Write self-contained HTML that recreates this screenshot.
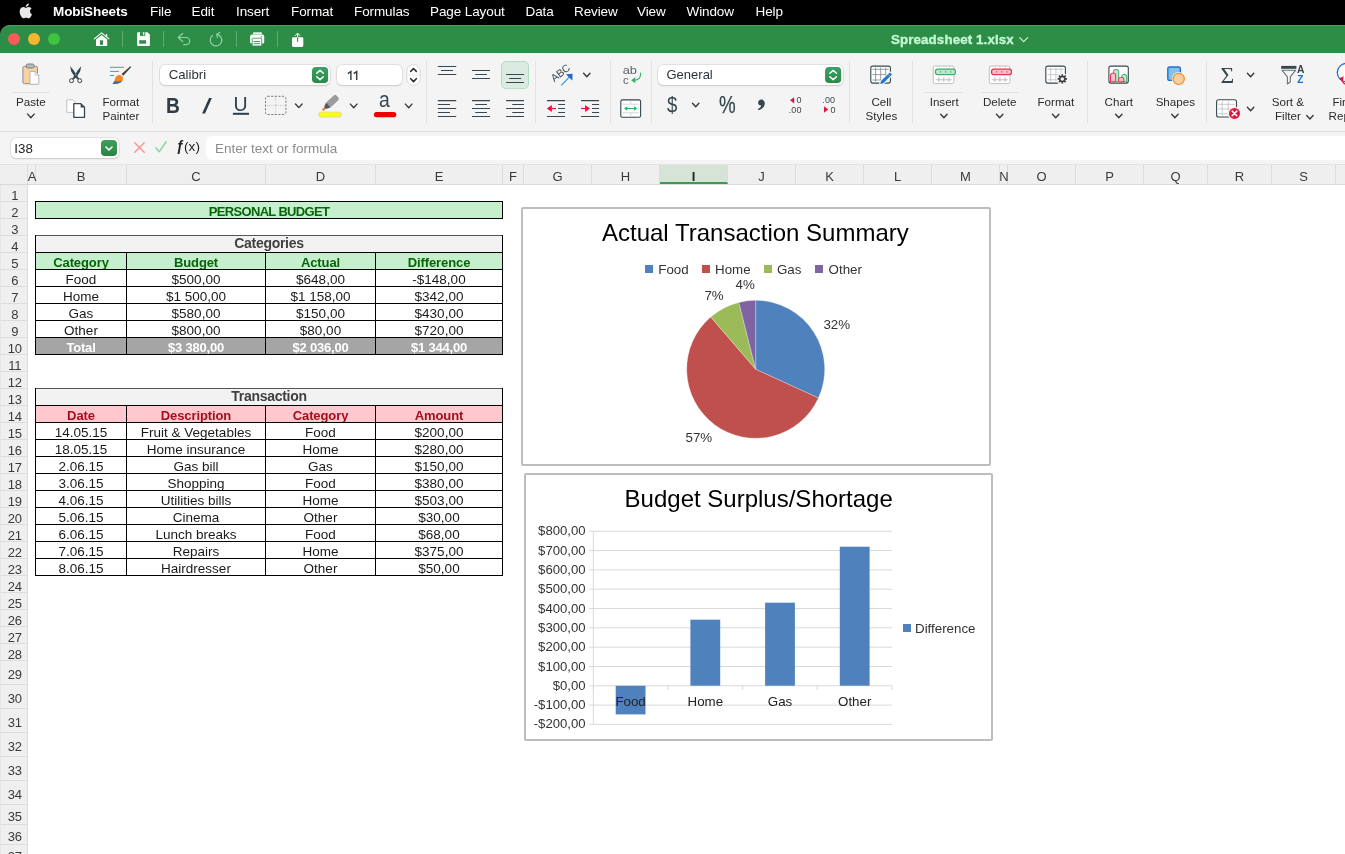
<!DOCTYPE html>
<html><head><meta charset="utf-8"><title>MobiSheets</title>
<style>
*{box-sizing:border-box;margin:0;padding:0}
html,body{width:1345px;height:854px;overflow:hidden;background:#fff;font-family:"Liberation Sans",sans-serif;}
.abs{position:absolute}
#menubar{position:absolute;left:0;top:0;width:1345px;height:25px;background:#000;color:#fff;font-size:13.5px}
#menubar span{position:absolute;top:4px;white-space:nowrap;letter-spacing:-0.1px}
#titlebar{position:absolute;left:0;top:25px;width:1345px;height:28px;background:#2d8d47;border-top-left-radius:10px;box-shadow:inset 0 1px 0 #4c9f63}
#blackcorner{position:absolute;left:0;top:25px;width:12px;height:12px;background:#000}
.tl{position:absolute;top:8px;width:12px;height:12px;border-radius:6px}
.tsep{position:absolute;top:6px;width:1px;height:16px;background:#62ab76}
#ribbon{position:absolute;left:0;top:53px;width:1345px;height:78px;background:#f4f4f4}
#ribline{position:absolute;left:0;top:131px;width:1345px;height:1px;background:#dddddd}
#fbar{position:absolute;left:0;top:132px;width:1345px;height:32px;background:#f4f4f4}
.vsep{position:absolute;top:8px;width:1px;height:62px;background:#e2e2e2}
.lbl{position:absolute;font-size:11.6px;color:#2b2b2b;white-space:nowrap;text-align:center;transform:translateX(-50%);line-height:14px}
.sel{position:absolute;background:#fff;border-radius:5px;box-shadow:0 0 0 0.5px #cfcfcf,0 1px 1.5px rgba(0,0,0,.18);font-size:13.5px;color:#222}
.gbtn{position:absolute;width:16px;height:16px;border-radius:4px;background:linear-gradient(#3fa05a,#2a8444)}
svg{position:absolute;overflow:visible}
#colhdr{position:absolute;left:0;top:164px;width:1345px;height:21px;background:#efefef;border-top:1px solid #e2e2e2;border-bottom:1px solid #d8d8d8}
.ch{position:absolute;top:0;height:19px;border-right:1px solid #dcdcdc;font-size:13px;color:#3a3a3a;text-align:center;line-height:24.4px}
#rowhdr{position:absolute;left:0;top:185px;width:28px;height:669px;background:#efefef;border-right:1px solid #dcdcdc;border-left:1px solid #e6e6e6}
.rh{position:absolute;left:0;width:26px;border-bottom:1px solid #dcdcdc;font-size:13px;color:#3a3a3a;text-align:center;padding-left:1.6px;letter-spacing:-0.2px}
.c{position:absolute;font-size:13.5px;color:#1a1a1a;text-align:center;white-space:nowrap;line-height:17px;height:17px}
.b{font-weight:bold;font-size:13px}
.bx{position:absolute;border:1px solid #000}
.hl{position:absolute;height:1px;background:#000}
.vl{position:absolute;width:1px;background:#000}
.ct{position:absolute;white-space:nowrap;color:#333;font-size:13.33px;line-height:14px}
</style></head><body><div id="root" style="position:absolute;left:0;top:0;width:1345px;height:854px;overflow:hidden;will-change:transform;background:#fff">

<div id="menubar">
<svg style="left:18.2px;top:3px" width="15.5" height="18.6" viewBox="0 0 170 200"><path fill="#e8e8e8" d="M150.4 130.3c-2.4 5.6-5.3 10.8-8.6 15.5-4.5 6.5-8.3 11-11.1 13.4-4.4 4.1-9.2 6.2-14.3 6.3-3.7 0-8.1-1-13.2-3.200-5.100-2.100-9.800-3.100-14.100-3.100-4.500 0-9.300 1-14.500 3.100-5.200 2.100-9.300 3.200-12.500 3.300-4.900.2-9.800-1.900-14.700-6.400-3.100-2.700-7-7.400-11.700-14-5-7-9.100-15.200-12.300-24.500-3.400-10-5.200-19.800-5.200-29.200 0-10.800 2.300-20.100 7-27.900 3.700-6.300 8.600-11.200 14.700-14.900 6.100-3.600 12.800-5.500 19.900-5.600 3.900 0 9 1.200 15.400 3.600 6.300 2.400 10.400 3.600 12.200 3.600 1.300 0 5.900-1.400 13.500-4.200 7.200-2.600 13.300-3.700 18.300-3.200 13.500 1.100 23.700 6.400 30.500 16-12.100 7.300-18.100 17.600-17.900 30.700.1 10.200 3.800 18.800 11.100 25.500 3.300 3.100 7 5.500 11.100 7.300-.9 2.600-1.800 5.100-2.800 7.400zM119.100 7c0 8-2.900 15.500-8.800 22.500-7 8.200-15.500 13-24.800 12.200-.1-1-.2-2-.2-3 0-7.700 3.400-16 9.300-22.700 3-3.400 6.800-6.200 11.300-8.500 4.600-2.200 8.900-3.400 12.900-3.700.1 1.100.2 2.200.2 3.200z"/></svg>
<span style="left:53px;font-weight:bold;">MobiSheets</span>
<span style="left:150px;">File</span>
<span style="left:191.5px;">Edit</span>
<span style="left:236px;">Insert</span>
<span style="left:291px;">Format</span>
<span style="left:354px;">Formulas</span>
<span style="left:430px;">Page Layout</span>
<span style="left:525.5px;">Data</span>
<span style="left:574px;">Review</span>
<span style="left:637px;">View</span>
<span style="left:686.5px;">Window</span>
<span style="left:755.5px;">Help</span>
</div>
<div id="blackcorner"></div><div id="titlebar">
<div class="tl" style="left:8px;background:#f35c58"></div><div class="tl" style="left:28px;background:#f8b62c"></div><div class="tl" style="left:48px;background:#3ec440"></div>
<div class="tsep" style="left:122px"></div>
<div class="tsep" style="left:163px"></div>
<div class="tsep" style="left:236px"></div>
<div class="tsep" style="left:277px"></div>
<div class="abs" style="left:0;top:-25px;width:1345px;height:100px">
<svg style="left:0;top:0" width="1345" height="100" viewBox="0 0 1345 100">
<path d="M94.300 38.900l7.300-6 7.300 6" fill="none" stroke="#fff" stroke-width="1.100" stroke-linejoin="miter" stroke-linecap="round"/>
<path d="M96 39.400l5.600-4.500 5.600 4.500v6.100a0.500 0.500 0 0 1-0.500 0.500h-10.200a0.500 0.500 0 0 1-0.500-0.500z" fill="#fff"/><path d="M105.900 34h1.300v3.600l-1.300-1.100z" fill="#fff"/>
<rect x="99.900" y="40.300" width="3.100" height="4.500" fill="#2d8d47"/>
<path d="M138.100 32.200h9.400l2.400 2.400v10.400a1 1 0 0 1-1 1h-10.800a1 1 0 0 1-1-1v-11.800a1 1 0 0 1 1-1z" fill="#fff"/>
<rect x="140" y="32.200" width="5.300" height="3.700" fill="#2d8d47"/><rect x="143.100" y="32.200" width="1.200" height="3" fill="#fff"/><rect x="139.200" y="40.200" width="6.900" height="3.500" fill="#2d8d47"/>
<path d="M182.700 33.500l-4.500 4 4.500 4M178.400 37.500h7.700a3.600 3.600 0 0 1 0 7.200h-2.300" fill="none" stroke="#90d0a3" stroke-width="1.200" stroke-linecap="round" stroke-linejoin="round"/>
<path d="M212.500 35.500A5.800 5.800 0 1 0 217 34.400" fill="none" stroke="#90d0a3" stroke-width="1.200" stroke-linecap="round"/><path d="M220 32.300l-3.500 2.100 1.100 3.200" fill="none" stroke="#90d0a3" stroke-width="1.200" stroke-linecap="round" stroke-linejoin="round"/>
<path d="M253.400 32.200h8.100l0.700 2h-9.500z" fill="#e4f3e8"/>
<path d="M252 34.500h10.300a1.900 1.900 0 0 1 1.900 1.900v6.200a1 1 0 0 1-1 1h-12.100a1 1 0 0 1-1-1v-6.200a1.900 1.900 0 0 1 1.900-1.900z" fill="#fff"/>
<rect x="252.200" y="38.200" width="9.500" height="7.800" rx="0.600" fill="#fff" stroke="#2d8d47" stroke-width="0.800"/><path d="M253.800 41.500h6.200M253.800 43.700h6.200" stroke="#2d8d47" stroke-width="0.900"/><circle cx="261.300" cy="36.700" r="0.600" fill="#2d8d47"/>
<rect x="292" y="37.300" width="11.300" height="9.600" rx="1.300" fill="#fff"/>
<rect x="297.050" y="37.200" width="1.100" height="4.700" fill="#2d8d47"/><rect x="297.050" y="33.300" width="1.100" height="4" fill="#fff"/>
<path d="M295.300 35.500l2.300-2.400 2.300 2.400" fill="none" stroke="#fff" stroke-width="1" stroke-linecap="round" stroke-linejoin="round"/>
</svg></div>
<div class="abs" style="left:891px;top:6.5px;font-size:13.3px;font-weight:bold;color:#c4f7d3;white-space:nowrap;letter-spacing:0.13px;-webkit-text-stroke:0.35px #c4f7d3">Spreadsheet 1.xlsx</div>
<svg style="left:1019px;top:11.5px" width="10" height="6" viewBox="0 0 10 6"><path d="M0.700 0.700l4 4 4-4" fill="none" stroke="#cdf5d9" stroke-width="1.150" stroke-linecap="round" stroke-linejoin="round"/></svg>
</div>
<div id="ribbon">
<div class="vsep" style="left:152px"></div>
<div class="vsep" style="left:426px"></div>
<div class="vsep" style="left:535px"></div>
<div class="vsep" style="left:610px"></div>
<div class="vsep" style="left:651px"></div>
<div class="vsep" style="left:849px"></div>
<div class="vsep" style="left:912px"></div>
<div class="vsep" style="left:1087px"></div>
<div class="vsep" style="left:1206px"></div>
<div class="abs" style="left:0;top:-53px;width:1345px;height:854px">
<svg style="left:0;top:0" width="1345" height="854" viewBox="0 0 1345 854">
<rect x="22.900" y="66.300" width="14.600" height="17.400" rx="1.800" fill="#f9d2a4" stroke="#8d8d8d" stroke-width="1"/>
<rect x="26.200" y="64" width="8" height="4" rx="1.600" fill="#b9bcbe" stroke="#6f777c" stroke-width="0.900"/>
<path d="M30 71.500h5.200l3.600 3.600v9.200h-8.800z" fill="#fff" stroke="#b6b6b6" stroke-width="1" stroke-linejoin="round"/>
<path d="M35.200 71.500v3.600h3.600" fill="none" stroke="#bdbdbd" stroke-width="0.900"/>
<line x1="12" y1="92.500" x2="49.700" y2="92.500" stroke="#e2e2e2" stroke-width="1"/>
<path d="M70.100 66.100L73.600 70.200L77.700 76.600L79.300 79.100L77.800 79.600L74.700 76.900L71.300 71.500z" fill="#37474f"/>
<path d="M81.300 66.100L77.800 70.200L73.700 76.600L72.100 79.100L73.600 79.600L76.700 76.900L80.100 71.500z" fill="#37474f"/>
<circle cx="71.500" cy="80.700" r="2" fill="none" stroke="#37474f" stroke-width="1"/><circle cx="79.700" cy="80.700" r="2" fill="none" stroke="#37474f" stroke-width="1"/>
<circle cx="75.700" cy="74.700" r="0.900" fill="#3a9bdc"/>
<path d="M66.800 99.800h6l3 3v9.600h-9z" fill="#fff" stroke="#c2c2c2" stroke-width="1" stroke-linejoin="round"/>
<path d="M73.800 103.600h7l3.700 3.700v10h-10.700z" fill="#fff" stroke="#37474f" stroke-width="1.300" stroke-linejoin="round"/>
<path d="M80.600 103.600l3.900 3.900h-3.900z" fill="#37474f"/>
<path d="M110 67.300h14M110 71.400h9M110 75.500h4.200" stroke="#3a9bdc" stroke-width="1" fill="none"/>
<path d="M130.300 66.200l1 0.900-8 8.600-1.800-1.700z" fill="#37474f"/>
<path d="M115 79c0.500-3 3.500-4.700 6.100-3.500 2 1 2.400 3.300 1.200 5.400-1.500 2.500-5 3.300-9.700 3 1.400-1.300 2-3 2.400-4.900z" fill="#f6861f"/>
<path d="M114.400 81c2.500 0.800 5.300 0.500 7.700-0.400-1.500 2.700-5 3.600-9.700 3.300 1-0.800 1.600-1.800 2-2.900z" fill="#2f6fba"/>
<path d="M209 98.100h2.900l-6.900 15.500h-2.900z" fill="#2f3d49"/>
<rect x="232.900" y="112.800" width="16.100" height="2" fill="#2f3d49"/>
<rect x="265.500" y="96.300" width="20.400" height="18.200" rx="2" fill="none" stroke="#7d7d7d" stroke-width="1" stroke-dasharray="2.200 1.400"/>
<path d="M275.700 97.500v16M267 105.400h17.600" stroke="#a9a9a9" stroke-width="0.800" stroke-dasharray="0.900 1.300" fill="none"/>
<path d="M27.6 114.1L30.9 117.7L34.2 114.1" fill="none" stroke="#333b41" stroke-width="1.4" stroke-linecap="round" stroke-linejoin="round"/>
<path d="M295.5 104.0L298.8 107.6L302.1 104.0" fill="none" stroke="#333b41" stroke-width="1.4" stroke-linecap="round" stroke-linejoin="round"/>
<path d="M350.4 104.1L353.7 107.7L357.0 104.1" fill="none" stroke="#333b41" stroke-width="1.4" stroke-linecap="round" stroke-linejoin="round"/>
<path d="M405.4 104.1L408.7 107.7L412.0 104.1" fill="none" stroke="#333b41" stroke-width="1.4" stroke-linecap="round" stroke-linejoin="round"/>
<rect x="318.600" y="112.100" width="22.800" height="5" rx="2.300" fill="#ffff00" stroke="#c8c8dd" stroke-width="0.600"/>
<g transform="translate(332.700 100.900) rotate(-43)"><rect x="-6.400" y="-3.300" width="12.800" height="6.600" rx="1.900" fill="#9a9b9c"/><path d="M-6 -3.300L-10.600 -1.300v2.600L-6 3.300z" fill="#4d5a63"/><ellipse cx="-12.200" cy="0" rx="1.700" ry="1.200" fill="#f57c1f"/></g>
<rect x="373.900" y="112.100" width="22.400" height="5.100" rx="2.500" fill="#ef0000"/>
<rect x="406.800" y="64.600" width="13.400" height="20.700" rx="6.500" fill="#fff" stroke="#cbcbcb" stroke-width="0.700"/>
<line x1="407.500" y1="74.900" x2="419.500" y2="74.900" stroke="#e3e3e3" stroke-width="0.800"/>
<path d="M410.700 71.400l2.800-2.900 2.800 2.900M410.700 78.700l2.800 2.900 2.800-2.900" fill="none" stroke="#2b2f33" stroke-width="1.600" stroke-linecap="round" stroke-linejoin="round"/>
<path d="M437.8 66.5H456.2M441 70.5H453M437.8 74.4H456.2" stroke="#3a4750" stroke-width="1.050" fill="none"/>
<path d="M472 70.5H490M475.2 74.4H486.9M472 78.4H490" stroke="#3a4750" stroke-width="1.050" fill="none"/>
<rect x="501.500" y="61.600" width="27" height="27" rx="4.500" fill="#dcebe1" stroke="#b3dac2" stroke-width="1"/>
<path d="M506.1 74.4H524M509.2 78.4H521.1M506.1 82.4H524" stroke="#3a4750" stroke-width="1.050" fill="none"/>
<path d="M437.8 100.6H456.2M437.8 104.5H450M437.8 108.5H456.2M437.8 112.5H450M437.8 116.5H456.2" stroke="#3a4750" stroke-width="1.050" fill="none"/>
<path d="M472 100.6H490M475.2 104.5H486.9M472 108.5H490M475.2 112.5H486.9M472 116.5H490" stroke="#3a4750" stroke-width="1.050" fill="none"/>
<path d="M506.1 100.6H524M512.2 104.5H524M506.1 108.5H524M512.2 112.5H524M506.1 116.5H524" stroke="#3a4750" stroke-width="1.050" fill="none"/>
<text x="0" y="0" transform="translate(554.300 82.200) rotate(-38)" font-family="Liberation Sans" font-size="10.500" fill="#3a4750" letter-spacing="-0.200">ABC</text>
<path d="M561.300 85.300L570 76.400" stroke="#2b8fe0" stroke-width="1.100" fill="none"/>
<path d="M572.600 73.800l-0.300 6.800-6.400-6.300z" fill="#1f6cc0"/>
<path d="M583.6 73.2L586.8 76.8L590.0 73.2" fill="none" stroke="#333b41" stroke-width="1.4" stroke-linecap="round" stroke-linejoin="round"/>
<path d="M546.900 100.600H565M546.900 116.500H565M558.200 104.500H565M558.200 108.500H565M558.200 112.500H565" stroke="#3a4750" stroke-width="1.050" fill="none"/>
<path d="M546.900 108.500l4.900-3.600v7.200z" fill="#e0143c"/><path d="M551 108.500h5" stroke="#e0143c" stroke-width="1.200"/>
<path d="M581 100.600H599.100M581 116.500H599.100M592 104.500H599.100M592 108.500H599.100M592 112.500H599.100" stroke="#3a4750" stroke-width="1.050" fill="none"/>
<path d="M590 108.500l-4.900-3.600v7.200z" fill="#e0143c"/><path d="M581 108.500h5" stroke="#e0143c" stroke-width="1.200"/>
<text x="622.700" y="73.500" font-family="Liberation Sans" font-size="10.300" fill="#59636b" textLength="14.300" lengthAdjust="spacingAndGlyphs">ab</text>
<text x="622.900" y="83.500" font-family="Liberation Sans" font-size="10.300" fill="#59636b" textLength="5.700" lengthAdjust="spacingAndGlyphs">c</text>
<path d="M640.600 73c0.300 4.500-1.800 7.200-6.400 7.300" stroke="#3dae6a" stroke-width="1.100" fill="none" stroke-linecap="round"/>
<path d="M631.100 80.300l4.200-3v6z" fill="#3dae6a"/>
<rect x="620.800" y="99.900" width="19.800" height="17.400" rx="1.500" fill="#fff" stroke="#37474f" stroke-width="1.100"/>
<path d="M622.500 104.200h16.500M622.500 112.800h16.500M630.700 101v3.200M630.700 112.800v3.400" stroke="#d0d3d5" stroke-width="0.900" fill="none"/>
<path d="M625.500 108.500h10" stroke="#3dae6a" stroke-width="1.100"/><path d="M624 108.500l3.200-2.300v4.600zM637.200 108.500l-3.200-2.300v4.600z" fill="#3dae6a"/>
<path d="M692.5 103.2L695.7 106.8L698.9 103.2" fill="none" stroke="#333b41" stroke-width="1.4" stroke-linecap="round" stroke-linejoin="round"/>
<path d="M761.300 99.600c2 0 3.500 1.500 3.500 3.700 0 3.200-2.500 5.900-6.300 7l-0.700-1.200c2-0.800 3.200-2 3.500-3.500-1.800 0.200-3.200-1-3.200-2.800 0-1.800 1.400-3.200 3.200-3.200z" fill="#37474f"/>
<path d="M790 100.300l4.200-3.100v6.200z" fill="#e0143c"/>
<text x="796.600" y="103.300" font-family="Liberation Sans" font-size="9.000" fill="#3a4750">0</text>
<text x="788.700" y="113" font-family="Liberation Sans" font-size="9.000" fill="#3a4750" letter-spacing="0.100">.00</text>
<text x="822.300" y="103.300" font-family="Liberation Sans" font-size="9.000" fill="#3a4750" letter-spacing="0.100">.00</text>
<path d="M828.200 109.500l-4.200-3.200v6.400z" fill="#e0143c"/>
<text x="830.500" y="113" font-family="Liberation Sans" font-size="9.000" fill="#3a4750">0</text>
<rect x="870.800" y="66.100" width="19.600" height="17" rx="2" fill="#fff" stroke="#37474f" stroke-width="1.100"/>
<path d="M875.600 67.500v14.200M880.700 67.500v14.200M885.700 67.500v14.200M872.500 69.300h16.200M872.500 74.600h16.200M872.500 80h16.200" stroke="#8f979c" stroke-width="0.950" fill="none"/>
<path d="M889.800 72.400l2.400 2.200-9 9-3.200 0.900 0.800-3.200z" fill="#f4f4f4" stroke="#f4f4f4" stroke-width="2" stroke-linejoin="round"/>
<path d="M889.900 72.600l2.100 2-8.700 8.700-3 0.800 0.700-3z" fill="#1f73c9"/><path d="M888.300 74.200l2.100 2" stroke="#f4f4f4" stroke-width="0.500"/>
<rect x="933.2" y="66" width="20.700" height="17.600" rx="2" fill="#fff" stroke="#bfbfbf" stroke-width="1"/>
<path d="M938.7 67.200h0.800M943.5 67.200h0.800M948.8000000000001 67.200h0.800" stroke="#b5b5b5" stroke-width="0.700"/>
<path d="M935.7 79.800h16M938.8000000000001 77.200v4.800M943.8000000000001 77.200v4.800M948.9000000000001 77.200v4.800" stroke="#b9b9b9" stroke-width="0.900" fill="none"/>
<rect x="935.4000000000001" y="69.100" width="20" height="5.500" rx="2.300" fill="#bfe6cf" stroke="#3dae6a" stroke-width="1.200"/>
<path d="M940.6 71v1.700M945.7 71v1.700M950.8000000000001 71v1.700" stroke="#3dae6a" stroke-width="0.900"/>
<rect x="989.3" y="66" width="20.700" height="17.600" rx="2" fill="#fff" stroke="#bfbfbf" stroke-width="1"/>
<path d="M994.8 67.200h0.800M999.5999999999999 67.200h0.800M1004.9 67.200h0.800" stroke="#b5b5b5" stroke-width="0.700"/>
<path d="M991.8 79.800h16M994.9 77.200v4.800M999.9 77.200v4.800M1005.0 77.200v4.800" stroke="#b9b9b9" stroke-width="0.900" fill="none"/>
<rect x="991.5" y="69.100" width="20" height="5.500" rx="2.300" fill="#f9c0c8" stroke="#e8304f" stroke-width="1.200"/>
<path d="M996.6999999999999 71v1.700M1001.8 71v1.700M1006.9 71v1.700" stroke="#e8304f" stroke-width="0.900"/>
<path d="M925 92.500h37.800M981.200 92.500h37.700" stroke="#e2e2e2" stroke-width="1"/>
<path d="M940.7 114.2L943.9 117.7L947.1 114.2" fill="none" stroke="#333b41" stroke-width="1.4" stroke-linecap="round" stroke-linejoin="round"/>
<path d="M996.5 114.2L999.7 117.7L1002.9 114.2" fill="none" stroke="#333b41" stroke-width="1.4" stroke-linecap="round" stroke-linejoin="round"/>
<path d="M1052.5 114.2L1055.7 117.7L1058.9 114.2" fill="none" stroke="#333b41" stroke-width="1.4" stroke-linecap="round" stroke-linejoin="round"/>
<path d="M1115.6 114.2L1118.8 117.7L1122.0 114.2" fill="none" stroke="#333b41" stroke-width="1.4" stroke-linecap="round" stroke-linejoin="round"/>
<path d="M1171.7 114.2L1174.9 117.7L1178.1 114.2" fill="none" stroke="#333b41" stroke-width="1.4" stroke-linecap="round" stroke-linejoin="round"/>
<rect x="1045.800" y="66.100" width="19.600" height="17" rx="2" fill="#fff" stroke="#37474f" stroke-width="1.100"/>
<path d="M1050.600 67.500v14.200M1055.900 67.500v14.200M1061 67.500v14.200M1047.500 69.300h16.200M1047.500 74.600h16.200M1047.500 79.800h16.200" stroke="#c4c4c4" stroke-width="0.900" fill="none"/>
<circle cx="1062.300" cy="78.900" r="6" fill="#f4f4f4"/>
<path d="M1064.90 78.90L1067.00 78.90M1064.14 80.74L1065.62 82.22M1062.30 81.50L1062.30 83.60M1060.46 80.74L1058.98 82.22M1059.70 78.90L1057.60 78.90M1060.46 77.06L1058.98 75.58M1062.30 76.30L1062.30 74.20M1064.14 77.06L1065.62 75.58" stroke="#3a3f44" stroke-width="1.700" fill="none"/>
<circle cx="1062.300" cy="78.900" r="2.500" fill="none" stroke="#3a3f44" stroke-width="1.500"/>
<rect x="1108.900" y="66.100" width="19.400" height="17" rx="2" fill="#fff" stroke="#37474f" stroke-width="1.100"/>
<path d="M1113.5 81.800V71.3a1.800 1.800 0 0 1 1.800-1.800h1.6a1.800 1.800 0 0 1 1.800 1.800V81.800z" fill="#bfe6cf" stroke="#3dae6a" stroke-width="1"/>
<path d="M1121.8 81.800V76.3a1.800 1.800 0 0 1 1.800-1.800h1.4a1.800 1.800 0 0 1 1.800 1.800V81.800z" fill="#bfe6cf" stroke="#3dae6a" stroke-width="1"/>
<path d="M1110.5 81.800V75.0a1.800 1.800 0 0 1 1.800-1.800h1.6a1.800 1.800 0 0 1 1.800 1.800V81.800z" fill="#f9c0c8" stroke="#e8304f" stroke-width="1"/>
<path d="M1118.7 81.800V79.2a1.800 1.800 0 0 1 1.800-1.800h1.4a1.800 1.800 0 0 1 1.800 1.800V81.800z" fill="#f9c0c8" stroke="#e8304f" stroke-width="1"/>
<rect x="1167.800" y="67" width="12.600" height="13.400" rx="2" fill="#7fc4e8" stroke="#1f6fd0" stroke-width="1.400"/>
<circle cx="1178.700" cy="78.900" r="7" fill="#f4f4f4"/><circle cx="1178.700" cy="78.900" r="5.600" fill="#f8cfa0" stroke="#f08a24" stroke-width="1.200"/>
<path d="M1247.4 73.2L1250.6 76.7L1253.8 73.2" fill="none" stroke="#333b41" stroke-width="1.4" stroke-linecap="round" stroke-linejoin="round"/>
<path d="M1247.4 107.2L1250.6 110.7L1253.8 107.2" fill="none" stroke="#333b41" stroke-width="1.4" stroke-linecap="round" stroke-linejoin="round"/>
<rect x="1216.600" y="99.800" width="19.900" height="17.200" rx="2" fill="#fff" stroke="#37474f" stroke-width="1.100"/>
<path d="M1222.200 101.200v14.500M1228.300 101.200v14.500M1218.200 104.300h16.600M1218.200 108.900h16.600M1218.200 113.700h16.600" stroke="#c4c4c4" stroke-width="0.900" fill="none"/>
<circle cx="1234.500" cy="113.400" r="6.700" fill="#f4f4f4"/><circle cx="1234.500" cy="113.400" r="5.500" fill="#e0143c"/>
<path d="M1232.200 111.100l4.600 4.600M1236.800 111.100l-4.600 4.600" stroke="#fff" stroke-width="1.500" stroke-linecap="round"/>
<rect x="1281.200" y="65.900" width="15.200" height="2.900" fill="#37474f"/>
<path d="M1282 70.200h13.700l-5.400 6.600v5l-2.900 2.200v-7.200z" fill="none" stroke="#6a737a" stroke-width="1.100" stroke-linejoin="round"/>
<text x="1297" y="73.200" style="font-family:'Liberation Sans';font-weight:700" font-size="10.300" fill="#37474f">A</text>
<text x="1297.200" y="83" style="font-family:'Liberation Sans';font-weight:700" font-size="10" fill="#1f6fd0">Z</text>
<path d="M1306.7 115.5L1309.9 118.9L1313.1 115.5" fill="none" stroke="#333b41" stroke-width="1.4" stroke-linecap="round" stroke-linejoin="round"/>
<circle cx="1346.500" cy="72.600" r="9.200" fill="#fff" stroke="#1f6fd0" stroke-width="1.300"/>
<path d="M1338.800 78.500l4.800-2.200-0.600 5z" fill="#e0143c"/><path d="M1341.500 79.500c1 3 2.500 4.500 5 5" stroke="#e0143c" stroke-width="1.200" fill="none"/>
</svg>
<div class="sel" style="left:160px;top:64.500px;width:170px;height:20.800px;line-height:20.800px;padding-left:8.700px;font-size:13.200px;color:#2c3338">Calibri</div>
<div class="sel" style="left:337px;top:64.500px;width:65px;height:20.800px;line-height:20.800px;padding-left:10.600px;font-size:13.200px;color:#2c3338;"></div>
<div class="sel" style="left:657.500px;top:64.500px;width:185.500px;height:20.800px;line-height:20.800px;padding-left:9px;font-size:13.000px;color:#2c3338">General</div>
<svg style="left:0;top:0" width="1345" height="854" viewBox="0 0 1345 854">
<defs><linearGradient id="g312" x1="0" y1="0" x2="0" y2="1"><stop offset="0" stop-color="#3aa063"/><stop offset="1" stop-color="#2b8a4d"/></linearGradient></defs>
<rect x="312" y="66.9" width="16.100" height="16.100" rx="3.800" fill="url(#g312)"/>
<path d="M316.75 73.2L320.05 70.4L323.35 73.2M316.75 76.80000000000001L320.05 79.60000000000001L323.35 76.80000000000001" fill="none" stroke="#fff" stroke-width="1.500" stroke-linecap="round" stroke-linejoin="round"/>
<defs><linearGradient id="g825" x1="0" y1="0" x2="0" y2="1"><stop offset="0" stop-color="#3aa063"/><stop offset="1" stop-color="#2b8a4d"/></linearGradient></defs>
<rect x="825.1" y="66.9" width="16.100" height="16.100" rx="3.800" fill="url(#g825)"/>
<path d="M829.85 73.2L833.15 70.4L836.4499999999999 73.2M829.85 76.80000000000001L833.15 79.60000000000001L836.4499999999999 76.80000000000001" fill="none" stroke="#fff" stroke-width="1.500" stroke-linecap="round" stroke-linejoin="round"/>
<path d="M347.900 73.600L350.900 71.500V80M353.700 73.600L356.700 71.500V80" fill="none" stroke="#2c3338" stroke-width="1.350" stroke-linejoin="miter"/>
</svg>
<div class="lbl" style="left:30.9px;top:94.8px">Paste</div>
<div class="lbl" style="left:120.8px;top:94.8px">Format</div>
<div class="lbl" style="left:120.9px;top:108.7px">Painter</div>
<div class="lbl" style="left:881.4px;top:94.8px">Cell</div>
<div class="lbl" style="left:881.4px;top:108.7px">Styles</div>
<div class="lbl" style="left:944.2px;top:94.8px">Insert</div>
<div class="lbl" style="left:999.7px;top:94.8px">Delete</div>
<div class="lbl" style="left:1055.9px;top:94.8px">Format</div>
<div class="lbl" style="left:1118.8px;top:94.8px">Chart</div>
<div class="lbl" style="left:1175.3px;top:94.8px">Shapes</div>
<div class="lbl" style="left:1287.9px;top:94.8px">Sort &amp;</div>
<div class="lbl" style="left:1287.9px;top:108.7px">Filter</div>
<div class="lbl" style="left:1332.4px;top:94.800px;transform:none;text-align:left">Find &amp;</div>
<div class="lbl" style="left:1328.600px;top:108.700px;transform:none;text-align:left">Replace</div>
<div class="abs" style="left:166.400px;top:93.600px;font-size:22.5px;font-weight:bold;color:#2f3d49;line-height:24px;transform-origin:0 0;transform:scaleX(0.850)">B</div>
<div class="abs" style="left:233.600px;top:93.200px;font-size:19.500px;color:#2f3d49;line-height:22px;transform-origin:0 0;transform:scaleX(1.0)">U</div>
<div class="abs" style="left:379.300px;top:88.400px;font-size:21.500px;color:#3a4750;line-height:24px;transform-origin:0 0;transform:scaleX(0.900)">a</div>
<div class="abs" style="left:666.500px;top:92.600px;font-size:21.500px;color:#37474f;line-height:24px;transform-origin:0 0;transform:scaleX(0.860)">$</div>
<div class="abs" style="left:718.600px;top:92.400px;font-size:24px;color:#37474f;line-height:26px;transform-origin:0 0;transform:scaleX(0.780);-webkit-text-stroke:0.25px #37474f">%</div>
<div class="abs" style="left:1220.600px;top:61.000px;font-size:23.6px;font-family:'Liberation Serif',serif;color:#37474f;line-height:28px;transform-origin:0 0;transform:scaleX(1.0)">&Sigma;</div>
</div>
</div><div id="ribline"></div>
<div id="fbar">
<div class="sel" style="left:11px;top:5.5px;width:107.6px;height:20.8px;line-height:21.4px;padding-left:3.3px;font-size:13.3px">I38</div>
<div class="gbtn" style="left:101px;top:8px"></div>
<svg style="left:105px;top:13.500px" width="8" height="6" viewBox="0 0 8 6"><path d="M1 1l3 3 3-3" fill="none" stroke="#fff" stroke-width="1.600" stroke-linecap="round" stroke-linejoin="round"/></svg>
<svg style="left:134px;top:10px" width="11" height="11" viewBox="0 0 11 11"><path d="M0.800 0.800l9.400 9.400M10.200 0.800l-9.400 9.400" stroke="#f19797" stroke-width="1.500" fill="none" stroke-linecap="round"/></svg>
<svg style="left:155px;top:9px" width="12" height="12" viewBox="0 0 12 12"><path d="M0.800 6.800l3.400 4 7-10" stroke="#86dc9b" stroke-width="1.500" fill="none" stroke-linecap="round" stroke-linejoin="round"/></svg>
<div class="abs" style="left:176px;top:6px;font-size:13.500px;color:#222;white-space:nowrap"><i style="font-weight:bold;font-size:14px;margin-right:0.2px">&fnof;</i><span style="font-size:13.6px;letter-spacing:0.1px">(x)</span></div>
<div class="abs" style="left:206px;top:4px;width:1139px;height:24px;background:#fff;border-radius:6px 0 0 6px"></div>
<div class="abs" style="left:215px;top:8.7px;font-size:13.500px;color:#8c8c8c;white-space:nowrap">Enter text or formula</div>
</div>
<div id="colhdr">
<div class="ch" style="left:0px;width:28px;"></div>
<div class="ch" style="left:28px;width:8px;"><span style="position:absolute;left:-4px;width:16px;text-align:center">A</span></div>
<div class="ch" style="left:36px;width:91px;">B</div>
<div class="ch" style="left:127px;width:139px;">C</div>
<div class="ch" style="left:266px;width:110px;">D</div>
<div class="ch" style="left:376px;width:127px;">E</div>
<div class="ch" style="left:503px;width:21px;">F</div>
<div class="ch" style="left:524px;width:68px;">G</div>
<div class="ch" style="left:592px;width:68px;">H</div>
<div class="ch" style="left:660px;width:68px;background:#d6e4d8;border-bottom:2px solid #3a9a50;font-weight:bold;color:#222;height:19px;line-height:24.4px;">I</div>
<div class="ch" style="left:728px;width:68px;">J</div>
<div class="ch" style="left:796px;width:68px;">K</div>
<div class="ch" style="left:864px;width:68px;">L</div>
<div class="ch" style="left:932px;width:68px;">M</div>
<div class="ch" style="left:1000px;width:8px;"><span style="position:absolute;left:-4px;width:16px;text-align:center">N</span></div>
<div class="ch" style="left:1008px;width:68px;">O</div>
<div class="ch" style="left:1076px;width:68px;">P</div>
<div class="ch" style="left:1144px;width:64px;">Q</div>
<div class="ch" style="left:1208px;width:64px;">R</div>
<div class="ch" style="left:1272px;width:64px;">S</div>
<div class="ch" style="left:1336px;width:10px;"></div>
</div>
<div id="rowhdr">
<div class="rh" style="top:0px;height:17px;line-height:21.8px">1</div>
<div class="rh" style="top:17px;height:17px;line-height:21.8px">2</div>
<div class="rh" style="top:34px;height:17px;line-height:21.8px">3</div>
<div class="rh" style="top:51px;height:17px;line-height:21.8px">4</div>
<div class="rh" style="top:68px;height:17px;line-height:21.8px">5</div>
<div class="rh" style="top:85px;height:17px;line-height:21.8px">6</div>
<div class="rh" style="top:102px;height:17px;line-height:21.8px">7</div>
<div class="rh" style="top:119px;height:17px;line-height:21.8px">8</div>
<div class="rh" style="top:136px;height:17px;line-height:21.8px">9</div>
<div class="rh" style="top:153px;height:17px;line-height:21.8px">10</div>
<div class="rh" style="top:170px;height:17px;line-height:21.8px">11</div>
<div class="rh" style="top:187px;height:17px;line-height:21.8px">12</div>
<div class="rh" style="top:204px;height:17px;line-height:21.8px">13</div>
<div class="rh" style="top:221px;height:17px;line-height:21.8px">14</div>
<div class="rh" style="top:238px;height:17px;line-height:21.8px">15</div>
<div class="rh" style="top:255px;height:17px;line-height:21.8px">16</div>
<div class="rh" style="top:272px;height:17px;line-height:21.8px">17</div>
<div class="rh" style="top:289px;height:17px;line-height:21.8px">18</div>
<div class="rh" style="top:306px;height:17px;line-height:21.8px">19</div>
<div class="rh" style="top:323px;height:17px;line-height:21.8px">20</div>
<div class="rh" style="top:340px;height:17px;line-height:21.8px">21</div>
<div class="rh" style="top:357px;height:17px;line-height:21.8px">22</div>
<div class="rh" style="top:374px;height:17px;line-height:21.8px">23</div>
<div class="rh" style="top:391px;height:17px;line-height:21.8px">24</div>
<div class="rh" style="top:408px;height:17px;line-height:21.8px">25</div>
<div class="rh" style="top:425px;height:17px;line-height:21.8px">26</div>
<div class="rh" style="top:442px;height:17px;line-height:21.8px">27</div>
<div class="rh" style="top:459px;height:17px;line-height:21.8px">28</div>
<div class="rh" style="top:476px;height:24px;line-height:28.8px">29</div>
<div class="rh" style="top:500px;height:24px;line-height:28.8px">30</div>
<div class="rh" style="top:524px;height:24px;line-height:28.8px">31</div>
<div class="rh" style="top:548px;height:24px;line-height:28.8px">32</div>
<div class="rh" style="top:572px;height:24px;line-height:28.8px">33</div>
<div class="rh" style="top:596px;height:24px;line-height:28.8px">34</div>
<div class="rh" style="top:620px;height:20px;line-height:24.8px">35</div>
<div class="rh" style="top:640px;height:20px;line-height:24.8px">36</div>
<div class="rh" style="top:660px;height:20px;line-height:24.8px">37</div>
</div>
<div class="abs" style="left:36px;top:202px;width:466px;height:17px;background:#c6efce"></div>
<div class="abs" style="left:36px;top:236px;width:466px;height:17px;background:#f2f2f2"></div>
<div class="abs" style="left:36px;top:253px;width:466px;height:17px;background:#c6efce"></div>
<div class="abs" style="left:36px;top:338px;width:466px;height:17px;background:#a5a5a5"></div>
<div class="abs" style="left:36px;top:389px;width:466px;height:17px;background:#f2f2f2"></div>
<div class="abs" style="left:36px;top:406px;width:466px;height:17px;background:#ffc7ce"></div>
<div class="c b" style="left:36px;top:202.7px;width:466px;color:#086408;letter-spacing:-0.65px">PERSONAL BUDGET</div>
<div class="c b" style="left:36px;top:236.7px;width:466px;color:#404040;font-size:14px;letter-spacing:-0.3px;top:235.1px">Categories</div>
<div class="c b" style="left:36px;top:253.7px;width:90px;color:#086408;letter-spacing:-0.1px">Category</div>
<div class="c b" style="left:127px;top:253.7px;width:138px;color:#086408;letter-spacing:-0.1px">Budget</div>
<div class="c b" style="left:266px;top:253.7px;width:109px;color:#086408;letter-spacing:-0.1px">Actual</div>
<div class="c b" style="left:376px;top:253.7px;width:126px;color:#086408;letter-spacing:-0.1px">Difference</div>
<div class="c " style="left:36px;top:270.7px;width:90px;">Food</div>
<div class="c " style="left:127px;top:270.7px;width:138px;">$500,00</div>
<div class="c " style="left:266px;top:270.7px;width:109px;">$648,00</div>
<div class="c " style="left:376px;top:270.7px;width:126px;">-$148,00</div>
<div class="c " style="left:36px;top:287.7px;width:90px;">Home</div>
<div class="c " style="left:127px;top:287.7px;width:138px;">$1 500,00</div>
<div class="c " style="left:266px;top:287.7px;width:109px;">$1 158,00</div>
<div class="c " style="left:376px;top:287.7px;width:126px;">$342,00</div>
<div class="c " style="left:36px;top:304.7px;width:90px;">Gas</div>
<div class="c " style="left:127px;top:304.7px;width:138px;">$580,00</div>
<div class="c " style="left:266px;top:304.7px;width:109px;">$150,00</div>
<div class="c " style="left:376px;top:304.7px;width:126px;">$430,00</div>
<div class="c " style="left:36px;top:321.7px;width:90px;">Other</div>
<div class="c " style="left:127px;top:321.7px;width:138px;">$800,00</div>
<div class="c " style="left:266px;top:321.7px;width:109px;">$80,00</div>
<div class="c " style="left:376px;top:321.7px;width:126px;">$720,00</div>
<div class="c b" style="left:36px;top:338.7px;width:90px;color:#fff;letter-spacing:-0.2px">Total</div>
<div class="c b" style="left:127px;top:338.7px;width:138px;color:#fff;letter-spacing:-0.2px">$3 380,00</div>
<div class="c b" style="left:266px;top:338.7px;width:109px;color:#fff;letter-spacing:-0.2px">$2 036,00</div>
<div class="c b" style="left:376px;top:338.7px;width:126px;color:#fff;letter-spacing:-0.2px">$1 344,00</div>
<div class="c b" style="left:36px;top:389.7px;width:466px;color:#404040;font-size:14px;letter-spacing:-0.3px;top:388.1px">Transaction</div>
<div class="c b" style="left:36px;top:406.7px;width:90px;color:#a3101b;letter-spacing:-0.1px">Date</div>
<div class="c b" style="left:127px;top:406.7px;width:138px;color:#a3101b;letter-spacing:-0.1px">Description</div>
<div class="c b" style="left:266px;top:406.7px;width:109px;color:#a3101b;letter-spacing:-0.1px">Category</div>
<div class="c b" style="left:376px;top:406.7px;width:126px;color:#a3101b;letter-spacing:-0.1px">Amount</div>
<div class="c " style="left:36px;top:423.7px;width:90px;">14.05.15</div>
<div class="c " style="left:127px;top:423.7px;width:138px;">Fruit &amp; Vegetables</div>
<div class="c " style="left:266px;top:423.7px;width:109px;">Food</div>
<div class="c " style="left:376px;top:423.7px;width:126px;">$200,00</div>
<div class="c " style="left:36px;top:440.7px;width:90px;">18.05.15</div>
<div class="c " style="left:127px;top:440.7px;width:138px;">Home insurance</div>
<div class="c " style="left:266px;top:440.7px;width:109px;">Home</div>
<div class="c " style="left:376px;top:440.7px;width:126px;">$280,00</div>
<div class="c " style="left:36px;top:457.7px;width:90px;">2.06.15</div>
<div class="c " style="left:127px;top:457.7px;width:138px;">Gas bill</div>
<div class="c " style="left:266px;top:457.7px;width:109px;">Gas</div>
<div class="c " style="left:376px;top:457.7px;width:126px;">$150,00</div>
<div class="c " style="left:36px;top:474.7px;width:90px;">3.06.15</div>
<div class="c " style="left:127px;top:474.7px;width:138px;">Shopping</div>
<div class="c " style="left:266px;top:474.7px;width:109px;">Food</div>
<div class="c " style="left:376px;top:474.7px;width:126px;">$380,00</div>
<div class="c " style="left:36px;top:491.7px;width:90px;">4.06.15</div>
<div class="c " style="left:127px;top:491.7px;width:138px;">Utilities bills</div>
<div class="c " style="left:266px;top:491.7px;width:109px;">Home</div>
<div class="c " style="left:376px;top:491.7px;width:126px;">$503,00</div>
<div class="c " style="left:36px;top:508.7px;width:90px;">5.06.15</div>
<div class="c " style="left:127px;top:508.7px;width:138px;">Cinema</div>
<div class="c " style="left:266px;top:508.7px;width:109px;">Other</div>
<div class="c " style="left:376px;top:508.7px;width:126px;">$30,00</div>
<div class="c " style="left:36px;top:525.7px;width:90px;">6.06.15</div>
<div class="c " style="left:127px;top:525.7px;width:138px;">Lunch breaks</div>
<div class="c " style="left:266px;top:525.7px;width:109px;">Food</div>
<div class="c " style="left:376px;top:525.7px;width:126px;">$68,00</div>
<div class="c " style="left:36px;top:542.7px;width:90px;">7.06.15</div>
<div class="c " style="left:127px;top:542.7px;width:138px;">Repairs</div>
<div class="c " style="left:266px;top:542.7px;width:109px;">Home</div>
<div class="c " style="left:376px;top:542.7px;width:126px;">$375,00</div>
<div class="c " style="left:36px;top:559.7px;width:90px;">8.06.15</div>
<div class="c " style="left:127px;top:559.7px;width:138px;">Hairdresser</div>
<div class="c " style="left:266px;top:559.7px;width:109px;">Other</div>
<div class="c " style="left:376px;top:559.7px;width:126px;">$50,00</div>
<div class="hl" style="left:35px;top:201px;width:468px;background:#000"></div>
<div class="hl" style="left:35px;top:218px;width:468px;background:#000"></div>
<div class="vl" style="left:35px;top:201px;height:18px"></div>
<div class="vl" style="left:502px;top:201px;height:18px"></div>
<div class="hl" style="left:35px;top:235px;width:468px;background:#555"></div>
<div class="hl" style="left:35px;top:252px;width:468px;background:#000"></div>
<div class="hl" style="left:35px;top:269px;width:468px;background:#000"></div>
<div class="hl" style="left:35px;top:286px;width:468px;background:#000"></div>
<div class="hl" style="left:35px;top:303px;width:468px;background:#000"></div>
<div class="hl" style="left:35px;top:320px;width:468px;background:#000"></div>
<div class="hl" style="left:35px;top:337px;width:468px;background:#000"></div>
<div class="hl" style="left:35px;top:354px;width:468px;background:#000"></div>
<div class="vl" style="left:35px;top:235px;height:120px"></div>
<div class="vl" style="left:502px;top:235px;height:120px"></div>
<div class="vl" style="left:126px;top:252px;height:103px"></div>
<div class="vl" style="left:265px;top:252px;height:103px"></div>
<div class="vl" style="left:375px;top:252px;height:103px"></div>
<div class="hl" style="left:35px;top:388px;width:468px;background:#555"></div>
<div class="hl" style="left:35px;top:405px;width:468px;background:#000"></div>
<div class="hl" style="left:35px;top:422px;width:468px;background:#000"></div>
<div class="hl" style="left:35px;top:439px;width:468px;background:#000"></div>
<div class="hl" style="left:35px;top:456px;width:468px;background:#000"></div>
<div class="hl" style="left:35px;top:473px;width:468px;background:#000"></div>
<div class="hl" style="left:35px;top:490px;width:468px;background:#000"></div>
<div class="hl" style="left:35px;top:507px;width:468px;background:#000"></div>
<div class="hl" style="left:35px;top:524px;width:468px;background:#000"></div>
<div class="hl" style="left:35px;top:541px;width:468px;background:#000"></div>
<div class="hl" style="left:35px;top:558px;width:468px;background:#000"></div>
<div class="hl" style="left:35px;top:575px;width:468px;background:#000"></div>
<div class="vl" style="left:35px;top:388px;height:188px"></div>
<div class="vl" style="left:502px;top:388px;height:188px"></div>
<div class="vl" style="left:126px;top:405px;height:171px"></div>
<div class="vl" style="left:265px;top:405px;height:171px"></div>
<div class="vl" style="left:375px;top:405px;height:171px"></div>
<div class="abs" style="left:521px;top:207px;width:470px;height:259px;border:2px solid #bdbdbd;border-radius:2px;background:#fff"></div>
<div class="abs" style="left:602px;top:218.5px;font-size:24px;line-height:28px;color:#000;white-space:nowrap">Actual Transaction Summary</div>
<div class="abs" style="left:645px;top:265px;width:8px;height:8px;background:#4f81bd"></div>
<div class="ct" style="left:658.3px;top:262.7px">Food</div>
<div class="abs" style="left:702px;top:265px;width:8px;height:8px;background:#c0504d"></div>
<div class="ct" style="left:715px;top:262.7px">Home</div>
<div class="abs" style="left:764px;top:265px;width:8px;height:8px;background:#9bbb59"></div>
<div class="ct" style="left:777px;top:262.7px">Gas</div>
<div class="abs" style="left:815px;top:265px;width:8px;height:8px;background:#8064a2"></div>
<div class="ct" style="left:828.6px;top:262.7px">Other</div>
<svg style="left:0;top:0" width="1345" height="854" viewBox="0 0 1345 854">
<path d="M755.7 369.3L755.70 300.30A69 69 0 0 1 818.45 398.00Z" fill="#4f81bd" stroke="#ffffff" stroke-opacity="0.55" stroke-width="0.5" stroke-linejoin="round"/>
<path d="M755.7 369.3L818.45 398.00A69 69 0 1 1 710.73 316.96Z" fill="#c0504d" stroke="#ffffff" stroke-opacity="0.55" stroke-width="0.5" stroke-linejoin="round"/>
<path d="M755.7 369.3L710.73 316.96A69 69 0 0 1 738.84 302.39Z" fill="#9bbb59" stroke="#ffffff" stroke-opacity="0.55" stroke-width="0.5" stroke-linejoin="round"/>
<path d="M755.7 369.3L738.84 302.39A69 69 0 0 1 755.70 300.30Z" fill="#8064a2" stroke="#ffffff" stroke-opacity="0.55" stroke-width="0.5" stroke-linejoin="round"/>
</svg>
<div class="ct" style="left:823.4px;top:317.5px">32%</div>
<div class="ct" style="left:685.5px;top:430.5px">57%</div>
<div class="ct" style="left:704.4px;top:288.8px">7%</div>
<div class="ct" style="left:735.6px;top:278px">4%</div>
<div class="abs" style="left:524px;top:473px;width:469px;height:268px;border:2px solid #bdbdbd;border-radius:2px;background:#fff"></div>
<div class="abs" style="left:624.6px;top:485px;font-size:24px;line-height:28px;color:#000;white-space:nowrap">Budget Surplus/Shortage</div>
<svg style="left:0;top:0" width="1345" height="854" viewBox="0 0 1345 854">
<line x1="588.8" y1="531.3" x2="892" y2="531.3" stroke="#d9d9d9" stroke-width="1"/>
<line x1="588.8" y1="550.6" x2="892" y2="550.6" stroke="#d9d9d9" stroke-width="1"/>
<line x1="588.8" y1="569.9" x2="892" y2="569.9" stroke="#d9d9d9" stroke-width="1"/>
<line x1="588.8" y1="589.2" x2="892" y2="589.2" stroke="#d9d9d9" stroke-width="1"/>
<line x1="588.8" y1="608.5" x2="892" y2="608.5" stroke="#d9d9d9" stroke-width="1"/>
<line x1="588.8" y1="627.8" x2="892" y2="627.8" stroke="#d9d9d9" stroke-width="1"/>
<line x1="588.8" y1="647.2" x2="892" y2="647.2" stroke="#d9d9d9" stroke-width="1"/>
<line x1="588.8" y1="666.5" x2="892" y2="666.5" stroke="#d9d9d9" stroke-width="1"/>
<line x1="588.8" y1="685.8" x2="892" y2="685.8" stroke="#d9d9d9" stroke-width="1"/>
<line x1="588.8" y1="705.1" x2="892" y2="705.1" stroke="#d9d9d9" stroke-width="1"/>
<line x1="588.8" y1="724.4" x2="892" y2="724.4" stroke="#d9d9d9" stroke-width="1"/>
<line x1="593.3" y1="531.3" x2="593.3" y2="724.4" stroke="#d9d9d9" stroke-width="1"/>
<line x1="593.3" y1="685.8" x2="593.3" y2="689.8" stroke="#d9d9d9" stroke-width="1"/>
<line x1="668.0" y1="685.8" x2="668.0" y2="689.8" stroke="#d9d9d9" stroke-width="1"/>
<line x1="742.6" y1="685.8" x2="742.6" y2="689.8" stroke="#d9d9d9" stroke-width="1"/>
<line x1="817.3" y1="685.8" x2="817.3" y2="689.8" stroke="#d9d9d9" stroke-width="1"/>
<line x1="892.0" y1="685.8" x2="892.0" y2="689.8" stroke="#d9d9d9" stroke-width="1"/>
<rect x="615.7" y="685.8" width="29.8" height="28.6" fill="#4f81bd"/>
<rect x="690.4" y="619.7" width="29.8" height="66.0" fill="#4f81bd"/>
<rect x="765.1" y="602.7" width="29.8" height="83.0" fill="#4f81bd"/>
<rect x="839.8" y="546.7" width="29.8" height="139.0" fill="#4f81bd"/>
</svg>
<div class="ct" style="left:485.6px;width:100px;text-align:right;font-size:13.15px;top:524.3px">$800,00</div>
<div class="ct" style="left:485.6px;width:100px;text-align:right;font-size:13.15px;top:543.6px">$700,00</div>
<div class="ct" style="left:485.6px;width:100px;text-align:right;font-size:13.15px;top:562.9px">$600,00</div>
<div class="ct" style="left:485.6px;width:100px;text-align:right;font-size:13.15px;top:582.2px">$500,00</div>
<div class="ct" style="left:485.6px;width:100px;text-align:right;font-size:13.15px;top:601.5px">$400,00</div>
<div class="ct" style="left:485.6px;width:100px;text-align:right;font-size:13.15px;top:620.8px">$300,00</div>
<div class="ct" style="left:485.6px;width:100px;text-align:right;font-size:13.15px;top:640.2px">$200,00</div>
<div class="ct" style="left:485.6px;width:100px;text-align:right;font-size:13.15px;top:659.5px">$100,00</div>
<div class="ct" style="left:485.6px;width:100px;text-align:right;font-size:13.15px;top:678.8px">$0,00</div>
<div class="ct" style="left:485.6px;width:100px;text-align:right;font-size:13.15px;top:698.1px">-$100,00</div>
<div class="ct" style="left:485.6px;width:100px;text-align:right;font-size:13.15px;top:717.4px">-$200,00</div>
<div class="ct" style="left:590.6px;width:80px;text-align:center;top:695.3px;color:#222">Food</div>
<div class="ct" style="left:665.3px;width:80px;text-align:center;top:695.3px;color:#222">Home</div>
<div class="ct" style="left:740.0px;width:80px;text-align:center;top:695.3px;color:#222">Gas</div>
<div class="ct" style="left:814.7px;width:80px;text-align:center;top:695.3px;color:#222">Other</div>
<div class="abs" style="left:902.5px;top:624.2px;width:8px;height:8px;background:#4f81bd"></div>
<div class="ct" style="left:915px;top:621.8px">Difference</div>
</div></body></html>
